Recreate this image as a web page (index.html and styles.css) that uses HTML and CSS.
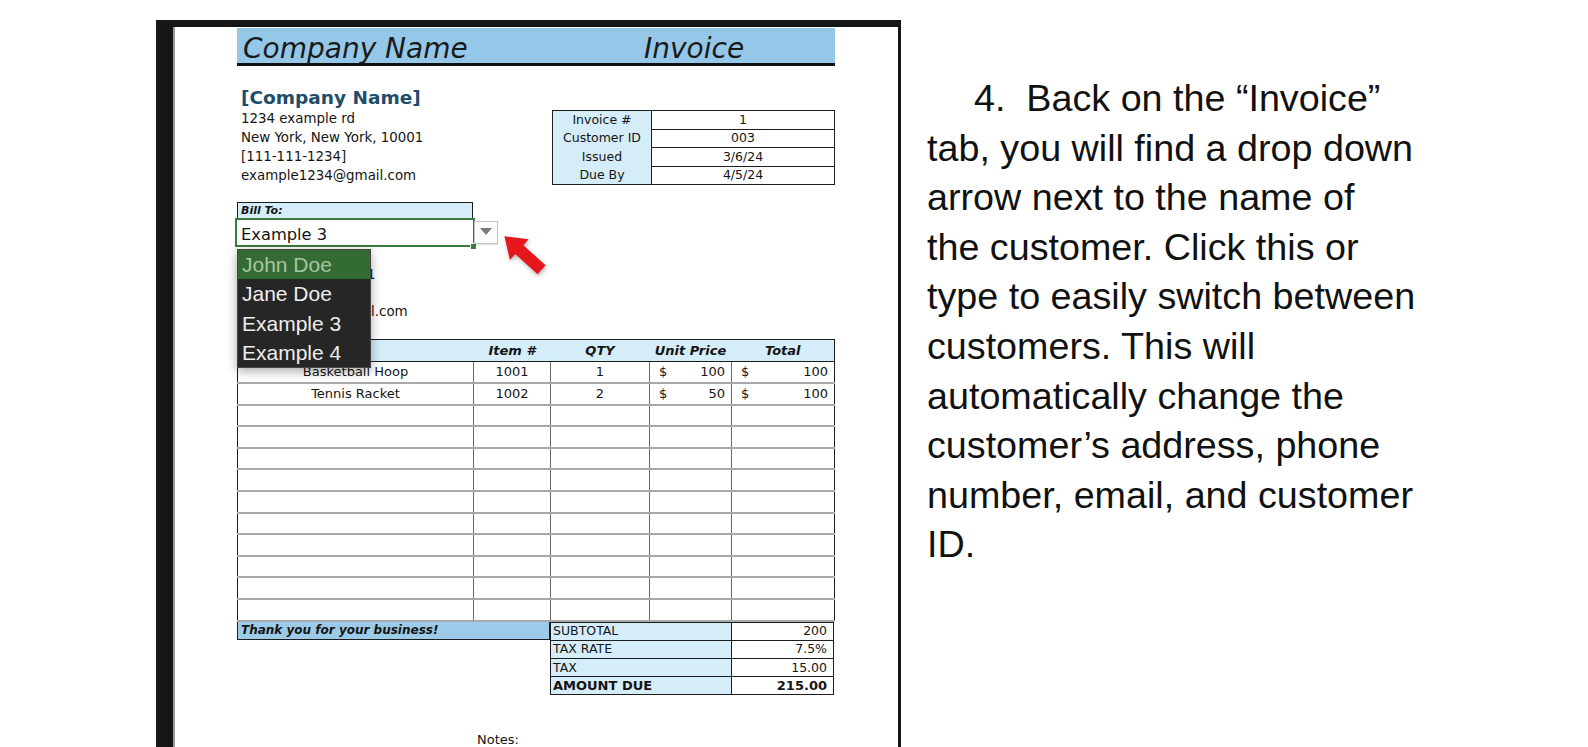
FILE: index.html
```html
<!DOCTYPE html>
<html lang="en">
<head>
  <meta charset="UTF-8">
  <meta name="viewport" content="width=device-width, initial-scale=1.0">
  <title>Invoice Template - Customer Drop Down</title>
  <link rel="stylesheet" href="styles.css">
</head>
<body>
  <div class="page">
    <div class="sheet">
      <div class="invoice">
        <div class="title-bar">
          <span class="title-company">Company Name</span>
          <span class="title-invoice">Invoice</span>
        </div>

        <div class="top-section">
          <div class="company">
            <div class="company-name">[Company Name]</div>
            <div>1234 example rd</div>
            <div>New York, New York, 10001</div>
            <div>[111-111-1234]</div>
            <div>example1234@gmail.com</div>
          </div>
          <table class="info-table">
            <tr><td class="label">Invoice #</td><td>1</td></tr>
            <tr><td class="label">Customer ID</td><td>003</td></tr>
            <tr><td class="label">Issued</td><td>3/6/24</td></tr>
            <tr><td class="label">Due By</td><td>4/5/24</td></tr>
          </table>
        </div>

        <div class="bill-to">
          <div class="bill-label">Bill To:</div>
          <div class="bill-select">
            <span>Example 3</span>
            <span class="fill-handle"></span>
            <span class="drop-btn">
              <svg width="12" height="7" viewBox="0 0 12 7"><polygon points="0,0 12,0 6,7" fill="#7b7b7b"/></svg>
            </span>
          </div>
          <div class="customer">
            <div>5678 example ave</div>
            <div>Austin, Texas 78701</div>
            <div>[111-111-1231]</div>
            <div>example321@gmail.com</div>
          </div>

          <ul class="drop-menu">
            <li class="active">John Doe</li>
            <li>Jane Doe</li>
            <li>Example 3</li>
            <li>Example 4</li>
          </ul>

          <svg class="pointer" width="60" height="56" viewBox="0 0 60 56">
            <g transform="translate(30 28) rotate(42) translate(-25 -14)">
              <polygon points="0,14 20,0 20,8 50,8 50,20 20,20 20,28" fill="#e5161c"/>
            </g>
          </svg>
        </div>

        <table class="items">
          <colgroup>
            <col class="c-desc"><col class="c-item"><col class="c-qty"><col class="c-price"><col class="c-total">
          </colgroup>
          <tr class="head">
            <th></th><th>Item #</th><th>QTY</th><th>Unit Price</th><th>Total</th>
          </tr>
          <tr>
            <td>Basketball Hoop</td><td>1001</td><td>1</td>
            <td><div class="money"><span>$</span><span>100</span></div></td>
            <td><div class="money"><span>$</span><span>100</span></div></td>
          </tr>
          <tr>
            <td>Tennis Racket</td><td>1002</td><td>2</td>
            <td><div class="money"><span>$</span><span>50</span></div></td>
            <td><div class="money"><span>$</span><span>100</span></div></td>
          </tr>
          <tr><td></td><td></td><td></td><td></td><td></td></tr>
          <tr><td></td><td></td><td></td><td></td><td></td></tr>
          <tr><td></td><td></td><td></td><td></td><td></td></tr>
          <tr><td></td><td></td><td></td><td></td><td></td></tr>
          <tr><td></td><td></td><td></td><td></td><td></td></tr>
          <tr><td></td><td></td><td></td><td></td><td></td></tr>
          <tr><td></td><td></td><td></td><td></td><td></td></tr>
          <tr><td></td><td></td><td></td><td></td><td></td></tr>
          <tr><td></td><td></td><td></td><td></td><td></td></tr>
          <tr><td></td><td></td><td></td><td></td><td></td></tr>
        </table>

        <div class="footer">
          <div class="thanks">Thank you for your business!</div>
          <table class="totals">
            <tr><td class="label">SUBTOTAL</td><td>200</td></tr>
            <tr><td class="label">TAX RATE</td><td>7.5%</td></tr>
            <tr><td class="label">TAX</td><td>15.00</td></tr>
            <tr class="due"><td class="label">AMOUNT DUE</td><td>215.00</td></tr>
          </table>
        </div>

        <div class="notes">Notes:</div>
      </div>
    </div>

    <p class="steps">
      <span class="step-first">4.&nbsp; Back on the “Invoice”</span><br>
      tab, you will find a drop down<br>
      arrow next to the name of<br>
      the customer. Click this or<br>
      type to easily switch between<br>
      customers. This will<br>
      automatically change the<br>
      customer’s address, phone<br>
      number, email, and customer<br>
      ID.
    </p>
  </div>
</body>
</html>
```

FILE: styles.css
```css
* {
  box-sizing: border-box;
}

html, body {
  margin: 0;
  padding: 0;
  background: #fff;
  overflow: hidden;
}

.page {
  display: flex;
  align-items: flex-start;
  padding: 20px 0 0 156px;
}

.sheet {
  width: 745px;
  height: 727px;
  border-left: 17px solid #161616;
  border-top: 7px solid #161616;
  border-right: 3px solid #161616;
  box-shadow: inset 2px 0 0 #9a9a9a;
  overflow: hidden;
  background: #fff;
}

.invoice {
  padding: 1px 63px 0 64px;
  font-family: "DejaVu Sans", "Liberation Sans", sans-serif;
  font-size: 13px;
  color: #141414;
}

/* title */
.title-bar {
  display: flex;
  align-items: flex-end;
  height: 38px;
  background: #95c8e8;
  border-bottom: 3px solid #111;
  font-size: 28px;
  font-style: italic;
  font-weight: 200;
  line-height: 1;
  color: #1a1a1a;
}

.title-company {
  width: 407px;
  padding-left: 6px;
}

/* company + info */
.top-section {
  display: flex;
  justify-content: space-between;
  margin-top: 21px;
}

.company {
  padding-left: 4px;
  line-height: 19px;
  font-size: 13.4px;
}

.company-name {
  font-size: 18.5px;
  font-weight: bold;
  color: #1e4d6b;
  line-height: 22px;
}

.info-table {
  margin-top: 23px;
  width: 283px;
  border-collapse: collapse;
  border: 1.5px solid #1c1c1c;
  font-size: 12.5px;
}

.info-table td {
  height: 18.2px;
  padding: 0;
  text-align: center;
  border: 1px solid #1c1c1c;
  line-height: 16px;
}

.info-table td.label {
  width: 99px;
  background: #d5edf9;
  border-top: none;
  border-bottom: none;
}

/* bill to */
.bill-to {
  position: relative;
  width: 236px;
  margin-top: 17px;
}

.bill-label {
  height: 16px;
  border: 1.5px solid #1c1c1c;
  border-bottom: none;
  background: #d5edf9;
  font-size: 11px;
  font-weight: bold;
  font-style: italic;
  padding-left: 3px;
  line-height: 15px;
}

.bill-select {
  position: relative;
  display: flex;
  align-items: flex-end;
  height: 29px;
  width: 240px;
  margin-left: -2px;
  border: 2px solid #3b7a40;
  background: #fff;
  font-size: 16.3px;
  padding: 0 0 1px 4px;
}

.fill-handle {
  position: absolute;
  right: -4px;
  bottom: -5px;
  width: 7px;
  height: 7px;
  background: #3b7a40;
  border: 1px solid #fff;
}

.drop-btn {
  position: absolute;
  left: 237px;
  top: 1px;
  width: 24px;
  height: 23px;
  display: flex;
  align-items: center;
  justify-content: center;
  padding-bottom: 3px;
  background: #fbfbfb;
  border: 1px solid #c4c4c4;
  box-shadow: 0 1px 1px rgba(0, 0, 0, 0.12);
}

.customer {
  padding-left: 4px;
  line-height: 18.5px;
  font-size: 13.4px;
  white-space: nowrap;
}

.drop-menu {
  position: absolute;
  left: 0;
  top: 47px;
  width: 134px;
  margin: 0;
  padding: 0;
  list-style: none;
  background: #262626;
  border: 1px solid #444;
  box-shadow: 0 3px 10px rgba(0, 0, 0, 0.35);
  font-family: "Liberation Sans", Arial, sans-serif;
  font-size: 21px;
}

.drop-menu li {
  height: 29.3px;
  line-height: 29.3px;
  padding-left: 4px;
  color: #ededed;
}

.drop-menu li.active {
  background: #346b32;
  color: #a8c4a3;
}

.pointer {
  position: absolute;
  left: 256px;
  top: 23px;
  filter: drop-shadow(1px 2px 2px rgba(0, 0, 0, 0.3));
}

/* items */
.items {
  margin-top: 18px;
  width: 597px;
  table-layout: fixed;
  border-collapse: collapse;
  border: 1.5px solid #1c1c1c;
}

.c-desc { width: 236px; }
.c-item { width: 77px; }
.c-qty { width: 99px; }
.c-price { width: 82px; }
.c-total { width: 103px; }

.items th {
  height: 22px;
  padding: 0;
  background: #d5edf9;
  font-style: italic;
  font-weight: bold;
  font-size: 13px;
  border-bottom: 1.5px solid #1c1c1c;
}

.items td {
  height: 21.6px;
  padding: 0;
  text-align: center;
  border-left: 1px solid #6a6a6a;
  border-bottom: 2px solid #a9a9a9;
  line-height: 16px;
}

.items td:first-child {
  border-left: none;
}

.money {
  display: flex;
  justify-content: space-between;
  padding: 0 6px 0 9px;
}

/* footer */
.footer {
  display: flex;
  align-items: flex-start;
}

.thanks {
  width: 313px;
  height: 18px;
  background: #9ccbe9;
  border: 1.5px solid #1c1c1c;
  border-top: none;
  font-size: 12px;
  font-weight: bold;
  font-style: italic;
  padding-left: 3px;
  line-height: 16px;
}

.totals {
  width: 284px;
  border-collapse: collapse;
  border: 1.5px solid #1c1c1c;
  border-top: none;
  font-size: 12.5px;
}

.totals td {
  height: 18.2px;
  padding: 0 6px 0 4px;
  text-align: right;
  border: 1px solid #1c1c1c;
  line-height: 16px;
}

.totals td.label {
  width: 181px;
  text-align: left;
  padding-left: 2px;
  background: #d5edf9;
}

.totals .due td {
  font-weight: bold;
  font-size: 13px;
}

.notes {
  margin: 36px 0 0 240px;
  line-height: 18px;
}

/* instructions on the right */
.steps {
  margin: 54px 0 0 26px;
  font-family: "Liberation Sans", Arial, sans-serif;
  font-size: 37.7px;
  line-height: 49.6px;
  color: #111;
  white-space: nowrap;
}

.step-first {
  padding-left: 47px;
}
```
